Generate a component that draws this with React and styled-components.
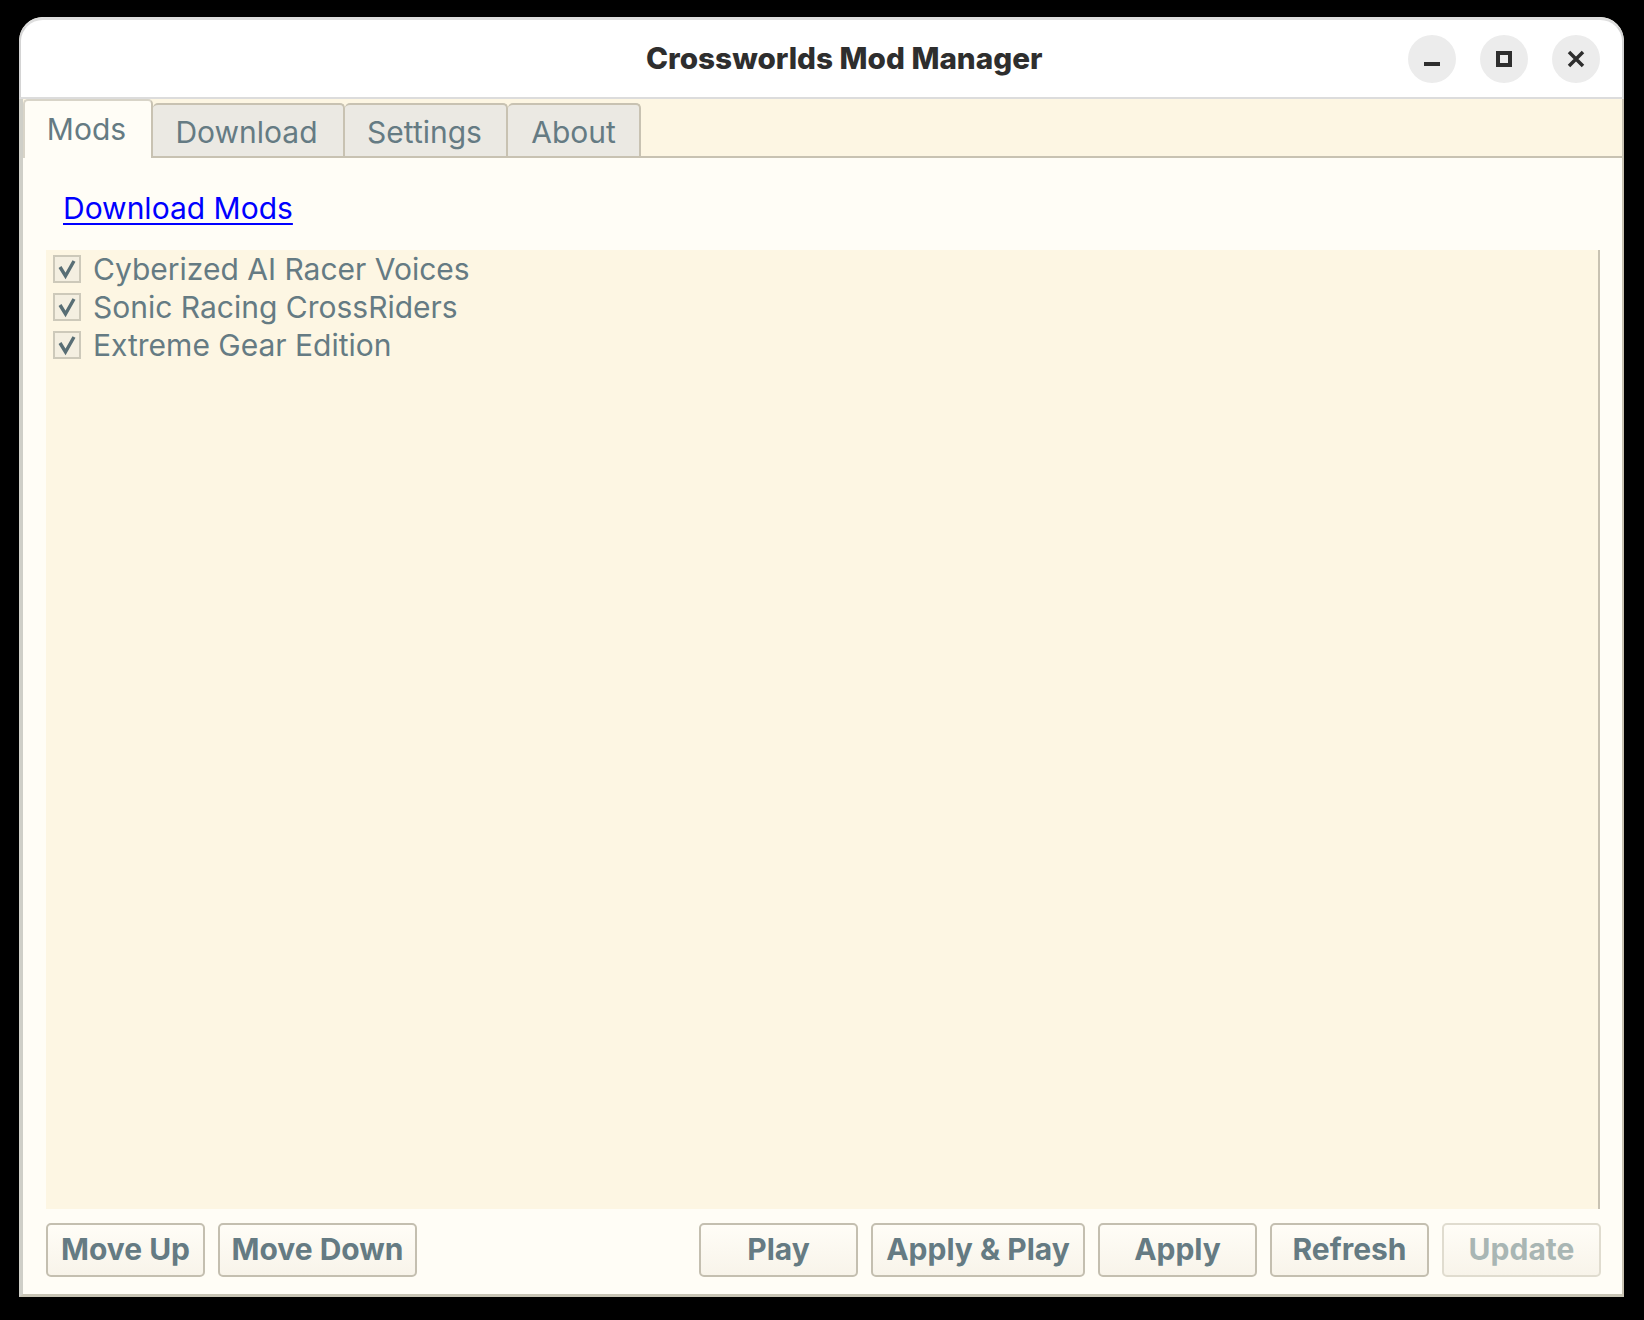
import React from 'react';
import styled, { createGlobalStyle } from 'styled-components';

const GlobalStyle = createGlobalStyle`
  html, body {
    margin: 0;
    padding: 0;
    background: #000;
  }
  body {
    font-family: Inter, "Liberation Sans", sans-serif;
  }
`;

const Page = styled.div`
  width: 1644px;
  height: 1320px;
  padding: 17px 20px 23px 19px;
  box-sizing: border-box;
`;

const Window = styled.div`
  height: 100%;
  display: flex;
  flex-direction: column;
  border-radius: 24px 24px 0 0;
  overflow: hidden;
  background: #fffdf6;
`;

const TitleBar = styled.div`
  height: 77px;
  flex: none;
  display: flex;
  align-items: center;
  justify-content: flex-end;
  position: relative;
  background: #fff;
  border-top: 3px solid #dedede;
  border-left: 2px solid #d4d4d4;
  border-right: 2px solid #d4d4d4;
  border-bottom: 2px solid #dcdcdc;
  border-radius: 24px 24px 0 0;
  padding-right: 22px;
  gap: 24px;
`;

const Title = styled.div`
  position: absolute;
  left: 625px;
  top: 20px;
  font-size: 29.7px;
  line-height: 36px;
  font-weight: 800;
  color: #2e2e2e;
  white-space: nowrap;
`;

const WinButton = styled.button`
  width: 48px;
  height: 48px;
  padding: 0;
  border: none;
  border-radius: 50%;
  background: #ececec;
  display: flex;
  align-items: center;
  justify-content: center;
  color: #2e2e2e;
`;

const Body = styled.div`
  flex: 1;
  display: flex;
  flex-direction: column;
  min-height: 0;
  border-left: 4px solid #cfcfc8;
  border-right: 2px solid #c8c2b2;
  border-bottom: 3px solid #c8c4b4;
`;

const TabBar = styled.div`
  height: 59px;
  flex: none;
  display: flex;
  align-items: flex-end;
  background: #fdf6e3;
  border-bottom: 2px solid #c8c2b2;
  box-sizing: border-box;
`;

const Tab = styled.div`
  height: ${(p) => (p.$active ? '59px' : '53px')};
  width: ${(p) => p.$width}px;
  flex: none;
  box-sizing: border-box;
  display: flex;
  justify-content: center;
  align-items: center;
  padding: ${(p) => (p.$active ? '0 3px 2px 0' : `3px ${p.$nudge || 0}px 0 0`)};
  margin-bottom: ${(p) => (p.$active ? '-2px' : '0')};
  position: relative;
  font-size: 30px;
  color: #657b83;
  background: ${(p) => (p.$active ? '#fffdf6' : '#ebe9e3')};
  border: 2px solid #c8c2b2;
  border-left-width: ${(p) => (p.$first ? '2px' : '0')};
  border-bottom: 0;
  border-color: ${(p) => (p.$active ? '#d8d4c8' : '#c8c2b2')};
  border-right-color: #c8c2b2;
  border-radius: 5px 5px 0 0;
`;

const Content = styled.div`
  flex: 1;
  display: flex;
  flex-direction: column;
  min-height: 0;
  padding: 0 22px 17px 23px;
`;

const LinkRow = styled.div`
  height: 92px;
  flex: none;
  display: flex;
  align-items: center;
  padding: 8px 0 0 17px;
  box-sizing: border-box;
`;

const DownloadLink = styled.a`
  font-size: 30px;
  line-height: 36px;
  color: #0000ff;
  text-decoration: underline;
  text-underline-offset: 4px;
  text-decoration-thickness: 2px;
`;

const ModList = styled.div`
  flex: 1;
  min-height: 0;
  background: #fdf6e3;
  border-right: 2px solid #c8c2b2;
  padding: 0 0 0 7px;
`;

const ModRow = styled.label`
  height: 38px;
  display: flex;
  align-items: center;
  gap: 12px;
  font-size: 30px;
  color: #657b83;
`;

const CheckBox = styled.span`
  width: 28px;
  height: 28px;
  flex: none;
  box-sizing: border-box;
  border: 2px solid #cdc9ba;
  background: #f4efe1;
  display: flex;
  align-items: center;
  justify-content: center;
`;

const ButtonRow = styled.div`
  flex: none;
  display: flex;
  align-items: center;
  gap: 13px;
  margin: 14px -1px 0 0;
`;

const Spacer = styled.div`
  flex: 1;
`;

const ActionButton = styled.button`
  width: ${(p) => p.$width}px;
  height: 54px;
  flex: none;
  padding: 0 0 2px;
  font-family: inherit;
  font-size: 30px;
  font-weight: 700;
  color: ${(p) => (p.disabled ? '#a9b6b4' : '#657b83')};
  background: linear-gradient(#fffdf7, #f8f4ea);
  border: 2px solid ${(p) => (p.disabled ? '#e0dccf' : '#c4bfb0')};
  border-radius: 5px;
`;

const MODS = ['Cyberized AI Racer Voices', 'Sonic Racing CrossRiders', 'Extreme Gear Edition'];

const TABS = [
  { label: 'Mods', width: 130, active: true, first: true },
  { label: 'Download', width: 192, nudge: 3 },
  { label: 'Settings', width: 163, nudge: 2 },
  { label: 'About', width: 133 },
];

export default function App() {
  return (
    <Page>
      <GlobalStyle />
      <Window>
        <TitleBar>
          <Title>Crossworlds Mod Manager</Title>
          <WinButton>
            <svg width="18" height="18" viewBox="0 0 18 18">
              <rect x="1" y="12" width="16" height="4" fill="currentColor" />
            </svg>
          </WinButton>
          <WinButton>
            <svg width="18" height="18" viewBox="0 0 18 18">
              <rect x="3" y="3" width="12" height="12" fill="none" stroke="currentColor" strokeWidth="4" />
            </svg>
          </WinButton>
          <WinButton>
            <svg width="18" height="18" viewBox="0 0 18 18">
              <path d="M2 2 L16 16 M16 2 L2 16" fill="none" stroke="currentColor" strokeWidth="3.5" />
            </svg>
          </WinButton>
        </TitleBar>
        <Body>
          <TabBar>
            {TABS.map((t) => (
              <Tab key={t.label} $width={t.width} $active={t.active} $first={t.first} $nudge={t.nudge}>
                {t.label}
              </Tab>
            ))}
          </TabBar>
          <Content>
            <LinkRow>
              <DownloadLink href="#">Download Mods</DownloadLink>
            </LinkRow>
            <ModList>
              {MODS.map((name) => (
                <ModRow key={name}>
                  <CheckBox>
                    <svg width="22" height="22" viewBox="0 0 22 22">
                      <path d="M4 9 L9.5 18 L18 3" fill="none" stroke="#586e75" strokeWidth="3.4" />
                    </svg>
                  </CheckBox>
                  {name}
                </ModRow>
              ))}
            </ModList>
            <ButtonRow>
              <ActionButton $width={159}>Move Up</ActionButton>
              <ActionButton $width={199}>Move Down</ActionButton>
              <Spacer />
              <ActionButton $width={159}>Play</ActionButton>
              <ActionButton $width={214}>Apply &amp; Play</ActionButton>
              <ActionButton $width={159}>Apply</ActionButton>
              <ActionButton $width={159}>Refresh</ActionButton>
              <ActionButton $width={159} disabled>Update</ActionButton>
            </ButtonRow>
          </Content>
        </Body>
      </Window>
    </Page>
  );
}
